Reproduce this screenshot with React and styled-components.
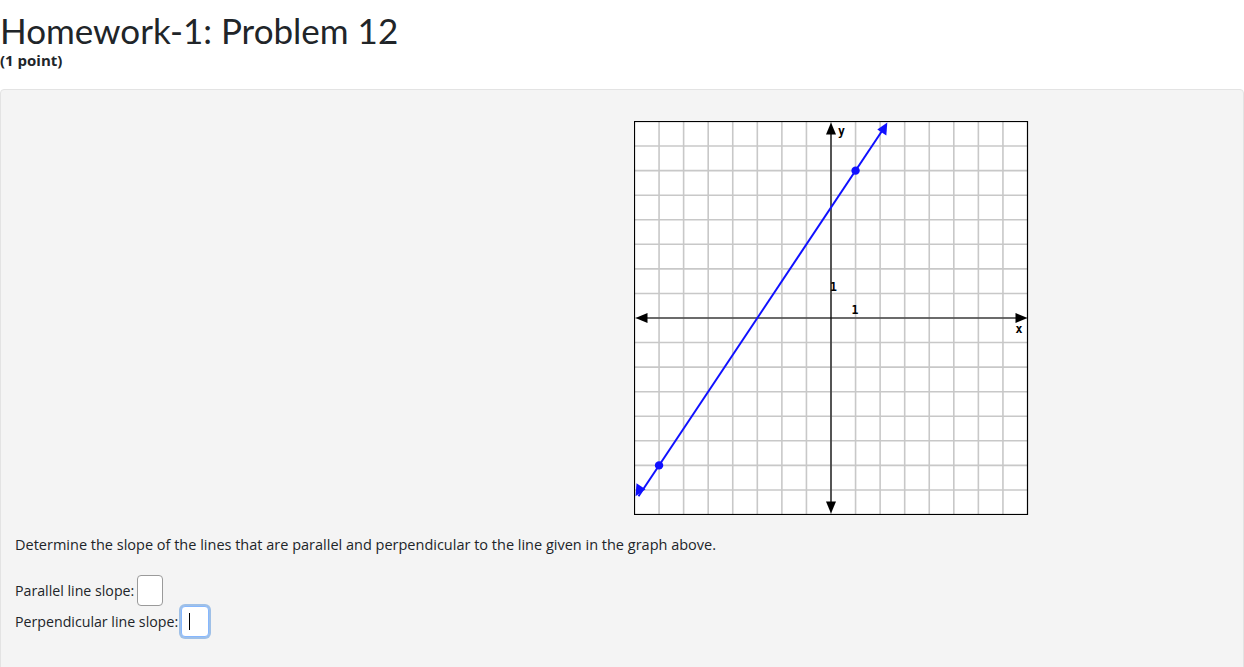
import React from 'react';
import styled, { createGlobalStyle } from 'styled-components';

const GlobalStyle = createGlobalStyle`
  html, body {
    margin: 0;
    padding: 0;
    background: #fff;
    font-family: "Open Sans", "Noto Sans", sans-serif;
    color: #212529;
  }
`;

const Page = styled.div`
  width: 1244px;
  height: 667px;
  overflow: hidden;
`;

const Header = styled.header`
  padding-top: 10px;
  height: 89px;
  box-sizing: border-box;
`;

const Title = styled.h2`
  margin: 0;
  font-family: Lato, "Open Sans", sans-serif;
  font-weight: 400;
  font-size: 35px;
  line-height: 40px;
  color: #212529;
`;

const Points = styled.div`
  font-weight: 700;
  font-size: 15px;
  line-height: 20px;
  color: #212529;
`;

const Panel = styled.section`
  background: #f4f4f4;
  border: 1px solid #e3e3e3;
  border-radius: 4px;
  padding: 31px 14px 40px;
  min-height: 600px;
`;

const GraphWrap = styled.div`
  margin-left: 619px;
  width: 395px;
  height: 394px;
`;

const Question = styled.p`
  margin: 20px 0 20px;
  font-size: 14.5px;
  line-height: 20px;
  color: #212529;
`;

const AnswerRow = styled.div`
  display: flex;
  align-items: center;
  font-size: 14.2px;
  color: #212529;
  height: 31px;
`;

const AnswerBox = styled.span`
  display: inline-flex;
  align-items: center;
  padding-left: 7px;
  box-sizing: border-box;
  width: ${({ $focus }) => ($focus ? '28px' : '26px')};
  height: 31px;
  margin-left: 3px;
  background: #fff;
  border: 1px solid ${({ $focus }) => ($focus ? '#86b7fe' : '#9a9a9a')};
  border-radius: 4px;
  box-shadow: ${({ $focus }) => ($focus ? '0 0 0 2px rgba(90, 150, 220, 0.55)' : 'none')};
`;

const Caret = styled.span`
  width: 1px;
  height: 17px;
  background: #000;
`;

const N = 16;
const S = 394;
const C = (S - 1) / N;
const O = 0.5;
const px = (x) => O + (x + 8) * C;
const py = (y) => O + (8 - y) * C;

const Graph = () => {
  const lines = [];
  for (let i = 1; i < N; i++) {
    lines.push(<line key={'v' + i} x1={O + i * C} y1={O} x2={O + i * C} y2={O + N * C} />);
    lines.push(<line key={'h' + i} x1={O} y1={O + i * C} x2={O + N * C} y2={O + i * C} />);
  }
  const f = (x) => 1.5 * x + 4.5;
  const x0 = -8;
  const x1 = (8 - 4.5) / 1.5;
  const ax = px(0);
  const ay = py(0);
  return (
    <svg width={S + 1} height={S} viewBox={`0 0 ${S + 1} ${S}`}>
      <rect x={O} y={O} width={N * C} height={N * C} fill="#fff" />
      <g stroke="#c8c8c8" strokeWidth="1.6">{lines}</g>
      <g stroke="#000" strokeWidth="1.2">
        <line x1={O + 4} y1={ay} x2={O + N * C - 4} y2={ay} />
        <line x1={ax} y1={O + 4} x2={ax} y2={O + N * C - 4} />
      </g>
      <g fill="#000">
        <polygon points={`${O + 1},${ay} ${O + 13},${ay - 5} ${O + 13},${ay + 5}`} />
        <polygon points={`${O + N * C},${ay} ${O + N * C - 12},${ay - 5} ${O + N * C - 12},${ay + 5}`} />
        <polygon points={`${ax},${O + 1} ${ax - 5},${O + 13} ${ax + 5},${O + 13}`} />
        <polygon points={`${ax},${O + N * C - 1} ${ax - 5},${O + N * C - 13} ${ax + 5},${O + N * C - 13}`} />
      </g>
      <rect x={O} y={O} width={N * C} height={N * C} fill="none" stroke="#000" strokeWidth="1.2" />
      <g fontFamily='"DejaVu Sans Mono", monospace' fontWeight="700" fontSize="11.5" fill="#000">
        <text x={ax + 7} y={O + 13}>y</text>
        <text x={O + N * C - 12} y={ay + 15}>x</text>
        <text x={ax - 1} y={py(1) - 2}>1</text>
        <text x={px(1) - 4} y={ay - 4}>1</text>
      </g>
      <g stroke="#1010ff" strokeWidth="2" fill="#1010ff">
        <line x1={px(x0) + 4} y1={py(f(x0)) - 6} x2={px(x1) - 4} y2={py(f(x1)) + 6} />
      </g>
      <g fill="#1010ff">
        <polygon points={`${px(x1) - 1},${O + 1} ${px(x1) - 2},${O + 14} ${px(x1) - 11},${O + 8}`} />
        <polygon points={`${O + 1},${py(f(x0)) - 6} ${O + 2},${py(f(x0)) - 19} ${O + 11},${py(f(x0)) - 13}`} />
        <circle cx={px(1)} cy={py(6)} r="4.2" />
        <circle cx={px(-7)} cy={py(-6)} r="4.2" />
      </g>
    </svg>
  );
};

export default function App() {
  return (
    <Page>
      <GlobalStyle />
      <Header>
        <Title>Homework-1: Problem 12</Title>
        <Points>(1 point)</Points>
      </Header>
      <Panel>
        <GraphWrap>
          <Graph />
        </GraphWrap>
        <Question>
          Determine the slope of the lines that are parallel and perpendicular to the line given in the graph above.
        </Question>
        <AnswerRow>
          Parallel line slope:
          <AnswerBox />
        </AnswerRow>
        <AnswerRow>
          Perpendicular line slope:
          <AnswerBox $focus>
            <Caret />
          </AnswerBox>
        </AnswerRow>
      </Panel>
    </Page>
  );
}
